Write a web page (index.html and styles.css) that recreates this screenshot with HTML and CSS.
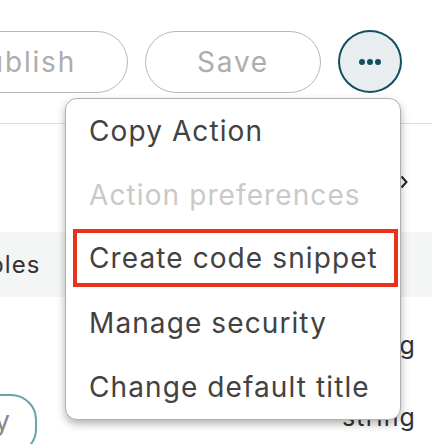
FILE: index.html
```html
<!DOCTYPE html>
<html lang="en">
<head>
    <meta charset="UTF-8">
    <meta name="viewport" content="width=device-width, initial-scale=1.0">
    <title>Action menu</title>
    <link rel="stylesheet" href="styles.css">
</head>
<body>
    <div class="page">
        <header class="toolbar">
            <button class="pill">Publish</button>
            <button class="pill">Save</button>
            <button class="more" aria-label="More actions">
                <svg width="22" height="6" viewBox="0 0 22 6">
                    <circle cx="3" cy="3" r="3" fill="#0f4f60"/>
                    <circle cx="11" cy="3" r="3" fill="#0f4f60"/>
                    <circle cx="19" cy="3" r="3" fill="#0f4f60"/>
                </svg>
            </button>
        </header>
        <section class="rows">
            <div class="row nav">
                <svg class="chev" width="8" height="14" viewBox="0 0 8 14">
                    <path d="M1.5 1.5 L6.5 7 L1.5 12.5" fill="none" stroke="#222" stroke-width="2"/>
                </svg>
            </div>
            <div class="row band"><span class="label">Variables</span></div>
            <div class="row field"><span class="type">string</span></div>
            <div class="row field last">
                <span class="chip">Apply</span>
                <span class="type">string</span>
            </div>
        </section>

        <div class="menu">
            <div class="item">Copy Action</div>
            <div class="item disabled">Action preferences</div>
            <div class="item marked">Create code snippet</div>
            <div class="item">Manage security</div>
            <div class="item">Change default title</div>
        </div>
    </div>
</body>
</html>
```

FILE: styles.css
```css
body {
    margin: 0;
    font-family: Inter, "Open Sans", sans-serif;
    letter-spacing: 1.1px;
    background: #fff;
    color: #3d3d3d;
}
.page {
    position: relative;
    width: 432px;
    height: 444px;
    overflow: hidden;
}
.toolbar {
    display: flex;
    justify-content: flex-end;
    align-items: center;
    gap: 17px;
    height: 124px;
    padding: 0 30px 0 0;
    box-sizing: border-box;
    border-bottom: 1px solid #dedede;
}
.pill {
    height: 62px;
    padding: 0 51px;
    border: 1.5px solid #b8b8b8;
    border-radius: 31px;
    background: #fff;
    color: #adadad;
    font-family: inherit;
    font-size: 28px;
    letter-spacing: 1.8px;
    flex-shrink: 0;
}
.more {
    width: 64px;
    height: 63px;
    border: 2px solid #0f4f60;
    border-radius: 50%;
    background: #e8eef0;
    display: flex;
    align-items: center;
    justify-content: center;
    padding: 0;
    flex-shrink: 0;
}
.rows {
    display: flex;
    flex-direction: column;
}
.row {
    display: flex;
    align-items: center;
    padding: 0 16px 0 0;
}
.nav {
    height: 108px;
    justify-content: flex-end;
    padding: 8px 24px 0 0;
    box-sizing: border-box;
}
.band {
    height: 65px;
    background: #f4f5f5;
    margin-left: -74px;
    font-size: 24px;
    color: #333;
}
.field {
    height: 82px;
    justify-content: flex-end;
    align-items: flex-start;
    box-sizing: border-box;
    padding-top: 33px;
    font-size: 25px;
    color: #333;
}
.last {
    justify-content: space-between;
    padding-top: 15px;
}
.chip {
    margin-left: -110px;
    padding: 8px 24px 16px 40px;
    border: 2px solid #6aa2ad;
    border-radius: 26px;
    font-size: 27px;
    color: #888;
}
.last .type {
    margin-top: 8px;
}
.menu {
    position: absolute;
    left: 65px;
    top: 98px;
    width: 336px;
    border: 1.5px solid #b0b0b0;
    border-radius: 12px;
    background: #fff;
    box-sizing: border-box;
    box-shadow: 0 4px 8px rgba(0, 0, 0, 0.3);
}
.item {
    height: 64px;
    display: flex;
    align-items: center;
    padding-left: 23px;
    font-size: 28px;
    color: #424242;
}
.disabled {
    color: #c9c9c9;
}
.marked {
    height: 58px;
    margin: 2px 2px 4px 7px;
    padding-left: 12px;
    border: 4px solid #e8321b;
    box-sizing: border-box;
}
```
